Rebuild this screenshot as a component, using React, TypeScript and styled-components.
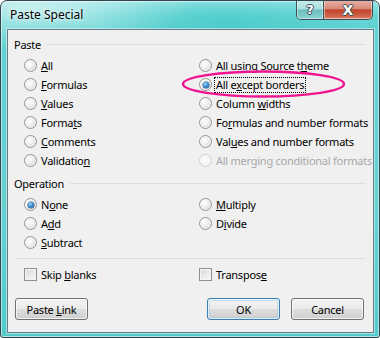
import React from "react";
import styled, { createGlobalStyle, css } from "styled-components";

const GlobalStyle = createGlobalStyle`
  html, body { margin: 0; padding: 0; background: #ffffff; }
  body { font-family: "Noto Sans", "DejaVu Sans", sans-serif; font-size: 11px; letter-spacing: -0.25px; color: #000; }
  * { box-sizing: border-box; }
`;

const Window = styled.div`
  position: relative;
  width: 380px;
  height: 338px;
  display: flex;
  flex-direction: column;
  border: 1px solid #34444f;
  border-radius: 7px 7px 3px 3px;
  background:
    radial-gradient(ellipse 160px 40px at 30px 8px, rgba(255,255,255,0.55), rgba(255,255,255,0) 100%),
    radial-gradient(ellipse 140px 30px at 230px 20px, rgba(40,190,190,0.35), rgba(40,190,190,0) 100%),
    linear-gradient(180deg, #93e3e3 0px, #6ad6d6 14px, #5fd1d1 30px, #64d1d1 200px, #52cbcb 100%);
  box-shadow: inset 0 0 0 1px rgba(255,255,255,0.55);
  overflow: hidden;
`;

const TitleBar = styled.div`
  height: 28px;
  display: flex;
  align-items: flex-start;
  flex: none;
`;

const Title = styled.div`
  padding: 6px 0 0 9px;
  font-size: 12px;
  letter-spacing: 0;
  line-height: 16px;
  color: #000;
  text-shadow: 0 0 6px rgba(255,255,255,0.9), 0 0 3px rgba(255,255,255,0.8);
`;

const CaptionButtons = styled.div`
  margin: -1px 6px 0 auto;
  display: flex;
  height: 20px;
  border: 1px solid #3a4f5a;
  border-top: none;
  border-radius: 0 0 5px 5px;
  overflow: hidden;
`;

const CaptionButton = styled.div<{ $variant: "help" | "close" }>`
  display: flex;
  align-items: center;
  justify-content: center;
  font-family: "DejaVu Sans", sans-serif;
  font-weight: bold;
  letter-spacing: 0;
  font-size: ${(p) => (p.$variant === "help" ? 13 : 14)}px;
  color: #fff;
  text-shadow: -1px 0 #3a4a55, 1px 0 #3a4a55, 0 -1px #3a4a55, 0 1px #3a4a55;
  box-shadow: inset 0 0 0 1px rgba(255,255,255,0.45);
  ${(p) =>
    p.$variant === "help"
      ? css`
          width: 27px;
          border-right: 1px solid #3a4f5a;
          background: linear-gradient(180deg, #c9eded 0%, #a9dede 48%, #6cbcbc 52%, #8fd3d3 100%);
        `
      : css`
          width: 48px;
          background: linear-gradient(180deg, #e7b2a6 0%, #d98a78 45%, #c1452c 52%, #d0634a 85%, #e08a6e 100%);
        `}
`;

const Client = styled.div`
  flex: 1;
  margin: 0 5px 4px 6px;
  border: 1px solid #6a7b88;
  box-shadow: 0 0 0 1px rgba(255,255,255,0.45);
  background: #f0f0f0;
  padding: 5px 7px 0 6px;
  display: flex;
  flex-direction: column;
`;

const GroupHeader = styled.div<{ $gap?: number }>`
  display: flex;
  align-items: center;
  height: 19px;
  margin-top: ${(p) => p.$gap ?? 0}px;
  gap: 6px;
  &::after {
    content: "";
    flex: 1;
    height: 1px;
    background: #d5dfe5;
  }
`;

const OptionGrid = styled.div`
  display: grid;
  grid-template-columns: 175px 1fr;
  grid-auto-rows: 19px;
  margin: 2px 0 0 10px;
`;

const Option = styled.label<{ $disabled?: boolean }>`
  display: flex;
  align-items: center;
  gap: 4px;
  white-space: nowrap;
  color: ${(p) => (p.$disabled ? "#a8a8a8" : "#000")};
`;

const RadioMark = styled.span<{ $checked?: boolean; $disabled?: boolean }>`
  width: 13px;
  height: 13px;
  border-radius: 50%;
  flex: none;
  position: relative;
  border: 1px solid ${(p) => (p.$disabled ? "#cfcfcf" : "#949494")};
  background: ${(p) =>
    p.$disabled
      ? "radial-gradient(circle at 40% 40%, #fbfbfb, #efefef 70%, #e6e6e6)"
      : "radial-gradient(circle at 40% 38%, #ffffff 0%, #ececec 45%, #d4d4d4 80%, #c8c8c8 100%)"};
  box-shadow: inset 0 0 0 1px rgba(255,255,255,0.6);
  ${(p) =>
    p.$checked &&
    css`
      &::after {
        content: "";
        position: absolute;
        left: 2.5px;
        top: 2.5px;
        width: 6px;
        height: 6px;
        border-radius: 50%;
        background: radial-gradient(circle at 40% 35%, #a6dcff 0%, #3a8cd0 45%, #0f4d85 100%);
        box-shadow: 0 0 0 0.5px #1b4f7e;
      }
    `}
`;

const CheckMark = styled.span`
  width: 13px;
  height: 13px;
  flex: none;
  border: 1px solid #8e8f8f;
  background: linear-gradient(135deg, #d8d8d8 0%, #e9e9e9 50%, #fbfbfb 100%);
  box-shadow: inset 0 0 0 1px #f4f4f4;
`;

const OptionText = styled.span<{ $focused?: boolean }>`
  line-height: 14px;
  ${(p) =>
    p.$focused &&
    css`
      outline: 1px dotted #000;
      padding: 0 1px;
      margin-left: -1px;
    `}
`;

const Key = styled.u`
  text-decoration: underline;
  text-underline-offset: 1px;
`;

const Separator = styled.div`
  height: 1px;
  background: #d5dfe5;
  margin: 6px 0 0 1px;
`;

const CheckGrid = styled(OptionGrid)`
  margin-top: 6px;
`;

const ButtonRow = styled.div`
  display: flex;
  align-items: center;
  margin: 14px 2px 0 1px;
`;

const RightButtons = styled.div`
  margin-left: auto;
  display: flex;
  gap: 11px;
`;

const PushButton = styled.button<{ $default?: boolean }>`
  width: 73px;
  height: 22px;
  padding: 0;
  font-family: "Noto Sans", "DejaVu Sans", sans-serif;
  font-size: 11px;
  letter-spacing: -0.25px;
  color: #000;
  border-radius: 3px;
  border: 1px solid ${(p) => (p.$default ? "#3c7fb1" : "#707070")};
  background: linear-gradient(180deg, #f2f2f2 0%, #ebebeb 48%, #dddddd 52%, #cfcfcf 100%);
  box-shadow: ${(p) =>
    p.$default
      ? "inset 0 0 0 1px rgba(255,255,255,0.6), inset 0 0 0 2px rgba(120,200,240,0.35)"
      : "inset 0 0 0 1px rgba(255,255,255,0.7)"};
`;

const Annotation = styled.svg`
  position: absolute;
  left: 179px;
  top: 67px;
  pointer-events: none;
`;

type Opt = {
  before: string;
  key?: string;
  after?: string;
  checked?: boolean;
  disabled?: boolean;
  focused?: boolean;
};

const pasteOptions: Opt[] = [
  { before: "", key: "A", after: "ll" },
  { before: "All using Source t", key: "h", after: "eme" },
  { before: "", key: "F", after: "ormulas" },
  { before: "All e", key: "x", after: "cept borders", checked: true, focused: true },
  { before: "", key: "V", after: "alues" },
  { before: "Column ", key: "w", after: "idths" },
  { before: "Forma", key: "t", after: "s" },
  { before: "Fo", key: "r", after: "mulas and number formats" },
  { before: "", key: "C", after: "omments" },
  { before: "Val", key: "u", after: "es and number formats" },
  { before: "Validatio", key: "n", after: "" },
  { before: "All merging conditional formats", disabled: true },
];

const opOptions: Opt[] = [
  { before: "N", key: "o", after: "ne", checked: true },
  { before: "", key: "M", after: "ultiply" },
  { before: "A", key: "d", after: "d" },
  { before: "D", key: "i", after: "vide" },
  { before: "", key: "S", after: "ubtract" },
];

const Label = ({ o }: { o: Opt }) => (
  <OptionText $focused={o.focused}>
    {o.before}
    {o.key && <Key>{o.key}</Key>}
    {o.after}
  </OptionText>
);

const RadioList = ({ items }: { items: Opt[] }) => (
  <OptionGrid>
    {items.map((o, i) => (
      <Option key={i} $disabled={o.disabled}>
        <RadioMark $checked={o.checked} $disabled={o.disabled} />
        <Label o={o} />
      </Option>
    ))}
  </OptionGrid>
);

export default function App() {
  return (
    <>
      <GlobalStyle />
      <Window>
        <TitleBar>
          <Title>Paste Special</Title>
          <CaptionButtons>
            <CaptionButton $variant="help">?</CaptionButton>
            <CaptionButton $variant="close">X</CaptionButton>
          </CaptionButtons>
        </TitleBar>
        <Client>
          <GroupHeader>Paste</GroupHeader>
          <RadioList items={pasteOptions} />
          <GroupHeader $gap={4}>Operation</GroupHeader>
          <RadioList items={opOptions} />
          <Separator />
          <CheckGrid>
            <Option>
              <CheckMark />
              <Label o={{ before: "Skip ", key: "b", after: "lanks" }} />
            </Option>
            <Option>
              <CheckMark />
              <Label o={{ before: "Transpos", key: "e", after: "" }} />
            </Option>
          </CheckGrid>
          <ButtonRow>
            <PushButton>
              Paste <Key>L</Key>ink
            </PushButton>
            <RightButtons>
              <PushButton $default>OK</PushButton>
              <PushButton>Cancel</PushButton>
            </RightButtons>
          </ButtonRow>
        </Client>
        <Annotation width="168" height="32" viewBox="0 0 168 32">
          <ellipse cx="83.5" cy="16" rx="80.5" ry="12.5" fill="none" stroke="#f01490" strokeWidth="2.4" />
        </Annotation>
      </Window>
    </>
  );
}
